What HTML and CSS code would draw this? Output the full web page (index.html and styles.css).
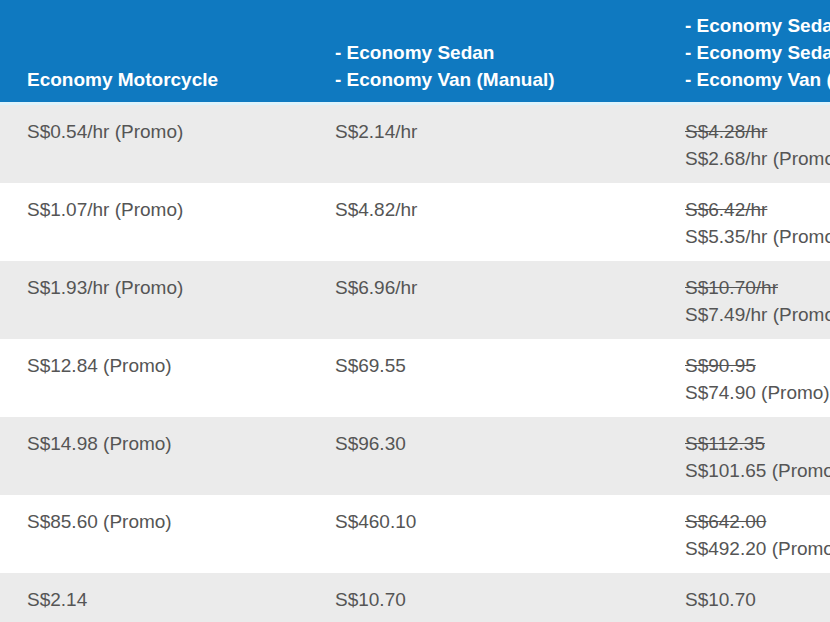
FILE: index.html
```html
<!DOCTYPE html>
<html>
<head>
<meta charset="utf-8">
<link rel="stylesheet" href="styles.css">
</head>
<body>
<div class="wrap">
<table class="rates">
  <colgroup>
    <col class="c1"><col class="c2"><col class="c3">
  </colgroup>
  <thead>
    <tr>
      <th>Economy Motorcycle</th>
      <th>- Economy Sedan<br>- Economy Van (Manual)</th>
      <th>- Economy Sedan (Auto)<br>- Economy Sedan (Manual)<br>- Economy Van (Auto)</th>
    </tr>
  </thead>
  <tbody>
    <tr>
      <td>S$0.54/hr (Promo)</td>
      <td>S$2.14/hr</td>
      <td><s>S$4.28/hr</s><br>S$2.68/hr (Promo)</td>
    </tr>
    <tr>
      <td>S$1.07/hr (Promo)</td>
      <td>S$4.82/hr</td>
      <td><s>S$6.42/hr</s><br>S$5.35/hr (Promo)</td>
    </tr>
    <tr>
      <td>S$1.93/hr (Promo)</td>
      <td>S$6.96/hr</td>
      <td><s>S$10.70/hr</s><br>S$7.49/hr (Promo)</td>
    </tr>
    <tr>
      <td>S$12.84 (Promo)</td>
      <td>S$69.55</td>
      <td><s>S$90.95</s><br>S$74.90 (Promo)</td>
    </tr>
    <tr>
      <td>S$14.98 (Promo)</td>
      <td>S$96.30</td>
      <td><s>S$112.35</s><br>S$101.65 (Promo)</td>
    </tr>
    <tr>
      <td>S$85.60 (Promo)</td>
      <td>S$460.10</td>
      <td><s>S$642.00</s><br>S$492.20 (Promo)</td>
    </tr>
    <tr>
      <td>S$2.14</td>
      <td>S$10.70</td>
      <td>S$10.70</td>
    </tr>
  </tbody>
</table>
</div>
</body>
</html>
```

FILE: styles.css
```css
html, body {
  margin: 0;
  padding: 0;
  background: #ffffff;
  overflow: hidden;
}
.wrap {
  width: 830px;
  height: 622px;
  overflow: hidden;
}
.rates {
  border-collapse: collapse;
  table-layout: fixed;
  width: 1100px;
  font-family: "Liberation Sans", Arial, sans-serif;
  font-size: 19px;
  line-height: 27px;
}
.c1 { width: 308px; }
.c2 { width: 350px; }
.c3 { width: 442px; }
.rates th {
  background: #0f79c0;
  color: #ffffff;
  font-weight: bold;
  text-align: left;
  vertical-align: bottom;
  height: 103px;
  box-sizing: border-box;
  padding: 0 27px 9px 27px;
  border-bottom: 3px solid #dff3fb;
  white-space: nowrap;
}
.rates td {
  color: #555555;
  vertical-align: top;
  padding: 13px 27px 11px 27px;
  height: 54px;
  white-space: nowrap;
}
.rates s {
  text-decoration: line-through;
}
.rates tbody tr:nth-child(odd) td {
  background: #ebebeb;
}
.rates tbody tr:nth-child(even) td {
  background: #ffffff;
}
```
